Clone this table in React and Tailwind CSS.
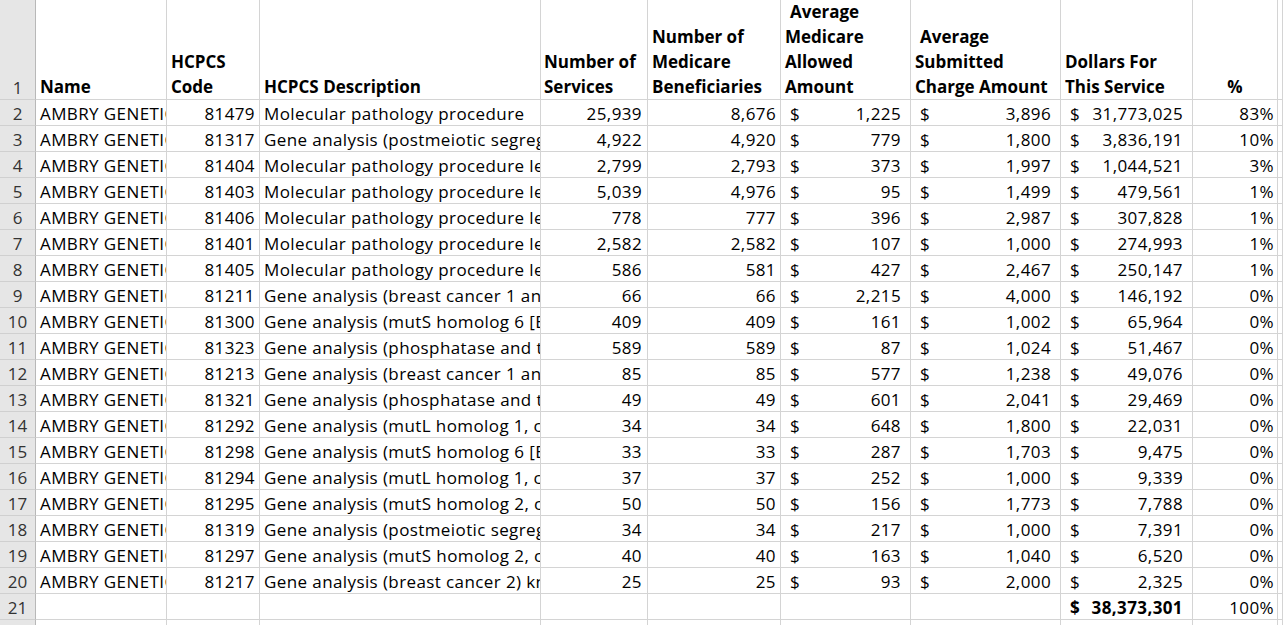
import React from "react";

const rows = [
  ["2", "AMBRY GENETICS CORPORATION", "81479", "Molecular pathology procedure", "25,939", "8,676", "1,225", "3,896", "31,773,025", "83%"],
  ["3", "AMBRY GENETICS CORPORATION", "81317", "Gene analysis (postmeiotic segregation increased 2)", "4,922", "4,920", "779", "1,800", "3,836,191", "10%"],
  ["4", "AMBRY GENETICS CORPORATION", "81404", "Molecular pathology procedure level 5", "2,799", "2,793", "373", "1,997", "1,044,521", "3%"],
  ["5", "AMBRY GENETICS CORPORATION", "81403", "Molecular pathology procedure level 4", "5,039", "4,976", "95", "1,499", "479,561", "1%"],
  ["6", "AMBRY GENETICS CORPORATION", "81406", "Molecular pathology procedure level 7", "778", "777", "396", "2,987", "307,828", "1%"],
  ["7", "AMBRY GENETICS CORPORATION", "81401", "Molecular pathology procedure level 2", "2,582", "2,582", "107", "1,000", "274,993", "1%"],
  ["8", "AMBRY GENETICS CORPORATION", "81405", "Molecular pathology procedure level 6", "586", "581", "427", "2,467", "250,147", "1%"],
  ["9", "AMBRY GENETICS CORPORATION", "81211", "Gene analysis (breast cancer 1 and 2)", "66", "66", "2,215", "4,000", "146,192", "0%"],
  ["10", "AMBRY GENETICS CORPORATION", "81300", "Gene analysis (mutS homolog 6 [E. coli])", "409", "409", "161", "1,002", "65,964", "0%"],
  ["11", "AMBRY GENETICS CORPORATION", "81323", "Gene analysis (phosphatase and tensin homolog)", "589", "589", "87", "1,024", "51,467", "0%"],
  ["12", "AMBRY GENETICS CORPORATION", "81213", "Gene analysis (breast cancer 1 and 2)", "85", "85", "577", "1,238", "49,076", "0%"],
  ["13", "AMBRY GENETICS CORPORATION", "81321", "Gene analysis (phosphatase and tensin homolog)", "49", "49", "601", "2,041", "29,469", "0%"],
  ["14", "AMBRY GENETICS CORPORATION", "81292", "Gene analysis (mutL homolog 1, colon cancer)", "34", "34", "648", "1,800", "22,031", "0%"],
  ["15", "AMBRY GENETICS CORPORATION", "81298", "Gene analysis (mutS homolog 6 [E. coli])", "33", "33", "287", "1,703", "9,475", "0%"],
  ["16", "AMBRY GENETICS CORPORATION", "81294", "Gene analysis (mutL homolog 1, colon cancer)", "37", "37", "252", "1,000", "9,339", "0%"],
  ["17", "AMBRY GENETICS CORPORATION", "81295", "Gene analysis (mutS homolog 2, colon cancer)", "50", "50", "156", "1,773", "7,788", "0%"],
  ["18", "AMBRY GENETICS CORPORATION", "81319", "Gene analysis (postmeiotic segregation increased 2)", "34", "34", "217", "1,000", "7,391", "0%"],
  ["19", "AMBRY GENETICS CORPORATION", "81297", "Gene analysis (mutS homolog 2, colon cancer)", "40", "40", "163", "1,040", "6,520", "0%"],
  ["20", "AMBRY GENETICS CORPORATION", "81217", "Gene analysis (breast cancer 2) known familial variant", "25", "25", "93", "2,000", "2,325", "0%"],
];

const gridCols =
  "grid grid-cols-[36px_131px_93px_281px_107px_133px_130px_150px_132px_85px_1fr]";
const cell = "border-r border-b border-[#d4d4d4] overflow-hidden whitespace-nowrap";
const rowHead =
  "bg-[#e6e6e6] border-r border-r-[#b8b8b8] border-b border-b-[#d0d0d0] text-center text-[#333]";

function Money({ value, bold }) {
  return (
    <div className={`${cell} flex items-end justify-between pl-[9px] pr-[9px] leading-[22px] ${bold ? "font-bold" : ""}`}>
      <span>$</span>
      <span>{value}</span>
    </div>
  );
}

function Num({ value, pr = "pr-[4px]" }) {
  return (
    <div className={`${cell} flex items-end justify-end leading-[22px] ${pr}`}>
      {value}
    </div>
  );
}

function Text({ value }) {
  return (
    <div className={`${cell} flex items-end pl-[4px] leading-[22px]`}>
      {value}
    </div>
  );
}

export default function App() {
  return (
    <div
      className="w-[1283px] h-[625px] overflow-hidden bg-white text-black text-[17px]"
      style={{ fontFamily: "'Open Sans', Lato, sans-serif" }}
    >
      {/* Header row */}
      <div className={`${gridCols} h-[100px] font-bold leading-[25px]`}>
        <div className={`${rowHead} flex items-end justify-center font-normal leading-[22px]`}>1</div>
        <div className={`${cell} flex items-end pl-[4px]`}>Name</div>
        <div className={`${cell} flex items-end pl-[4px]`}>
          <span>HCPCS<br />Code</span>
        </div>
        <div className={`${cell} flex items-end pl-[4px]`}>HCPCS Description</div>
        <div className={`${cell} flex items-end pl-[3px]`}>
          <span>Number of<br />Services</span>
        </div>
        <div className={`${cell} flex items-end pl-[4px]`}>
          <span>Number of<br />Medicare<br />Beneficiaries</span>
        </div>
        <div className={`${cell} flex items-end pl-[4px]`}>
          <span><span className="pl-[5px]">Average</span><br />Medicare<br />Allowed<br />Amount</span>
        </div>
        <div className={`${cell} flex items-end pl-[4px]`}>
          <span><span className="pl-[5px]">Average</span><br />Submitted<br />Charge Amount</span>
        </div>
        <div className={`${cell} flex items-end pl-[4px]`}>
          <span>Dollars For<br />This Service</span>
        </div>
        <div className={`${cell} flex items-end justify-center`}>%</div>
        <div className={cell}></div>
      </div>

      {rows.map((r) => (
        <div key={r[0]} className={`${gridCols} h-[26px] tracking-[0.4px]`}>
          <div className={`${rowHead} flex items-end justify-center leading-[22px] tracking-normal`}>{r[0]}</div>
          <Text value={r[1]} />
          <Num value={r[2]} pr="pr-[4px]" />
          <Text value={r[3]} />
          <Num value={r[4]} pr="pr-[5px]" />
          <Num value={r[5]} pr="pr-[4px]" />
          <Money value={r[6]} />
          <Money value={r[7]} />
          <Money value={r[8]} />
          <Num value={r[9]} pr="pr-[3px]" />
          <div className={cell}></div>
        </div>
      ))}

      {/* Totals row */}
      <div className={`${gridCols} h-[26px] tracking-[0.4px]`}>
        <div className={`${rowHead} flex items-end justify-center leading-[22px] tracking-normal`}>21</div>
        <div className={cell}></div>
        <div className={cell}></div>
        <div className={cell}></div>
        <div className={cell}></div>
        <div className={cell}></div>
        <div className={cell}></div>
        <div className={cell}></div>
        <Money value="38,373,301" bold />
        <Num value="100%" pr="pr-[3px]" />
        <div className={cell}></div>
      </div>

      <div className={`${gridCols} h-[26px]`}>
        <div className={rowHead}>22</div>
        {Array.from({ length: 10 }).map((_, i) => (
          <div key={i} className={cell}></div>
        ))}
      </div>
    </div>
  );
}
